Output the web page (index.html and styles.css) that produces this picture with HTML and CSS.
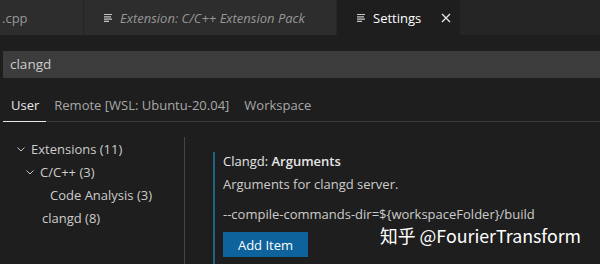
FILE: index.html
```html
<!DOCTYPE html>
<html lang="en">
<head>
  <meta charset="UTF-8">
  <title>Settings</title>
  <link rel="stylesheet" href="styles.css">
</head>
<body>
  <div class="tabs">
    <div class="tab tab-cut">.cpp</div>
    <div class="tab tab-preview">
      <svg class="tab-icon" width="10" height="10" viewBox="0 0 10 10">
        <path d="M1 1.5h8M1 3.8h7M1 6.1h8M1 8.4h5" stroke="#c5c5c5" stroke-width="1.2"/>
      </svg>
      <span>Extension: C/C++ Extension Pack</span>
    </div>
    <div class="tab tab-active">
      <svg class="tab-icon" width="10" height="10" viewBox="0 0 10 10">
        <path d="M1 1.5h8M1 3.8h7M1 6.1h8M1 8.4h5" stroke="#c5c5c5" stroke-width="1.2"/>
      </svg>
      <span>Settings</span>
      <svg class="tab-close" width="10" height="10" viewBox="0 0 10 10">
        <path d="M1 1l8 8M9 1l-8 8" stroke="#e8e8e8" stroke-width="1.3"/>
      </svg>
    </div>
  </div>

  <div class="editor">
    <div class="search">clangd</div>

    <div class="scopes">
      <span class="scope scope-on">User</span>
      <span class="scope">Remote [WSL: Ubuntu-20.04]</span>
      <span class="scope">Workspace</span>
    </div>

    <div class="body">
      <ul class="toc">
        <li class="lvl0">
          <svg class="chev" width="10" height="10" viewBox="0 0 10 10"><path d="M1.5 3.5L5 7l3.5-3.5" fill="none" stroke="#c5c5c5" stroke-width="1"/></svg>
          Extensions (11)
        </li>
        <li class="lvl1">
          <svg class="chev" width="10" height="10" viewBox="0 0 10 10"><path d="M1.5 3.5L5 7l3.5-3.5" fill="none" stroke="#c5c5c5" stroke-width="1"/></svg>
          C/C++ (3)
        </li>
        <li class="lvl2">Code Analysis (3)</li>
        <li class="leaf">clangd (8)</li>
      </ul>

      <div class="divider"></div>

      <div class="setting">
        <div class="setting-title">Clangd: <b>Arguments</b></div>
        <div class="setting-desc">Arguments for clangd server.</div>
        <div class="setting-item">--compile-commands-dir=${workspaceFolder}/build</div>
        <button class="add-btn">Add Item</button>
      </div>
    </div>

    <div class="watermark">知乎 @FourierTransform</div>
  </div>
</body>
</html>
```

FILE: styles.css
```css
body {
  margin: 0;
  width: 600px;
  height: 264px;
  overflow: hidden;
  background: #1e1e1e;
  font-family: "Open Sans", "Noto Sans CJK SC", sans-serif;
  font-size: 13px;
  color: #cccccc;
}

/* editor tab strip */
.tabs {
  display: flex;
  height: 35px;
  background: #252526;
}
.tab {
  display: flex;
  align-items: center;
  background: #2d2d2d;
  color: #969696;
  border-right: 1px solid #252526;
  box-sizing: border-box;
}
.tab-cut {
  width: 84px;
  padding-left: 2px;
}
.tab-preview {
  width: 253px;
  padding-left: 19px;
}
.tab-preview span {
  font-style: italic;
}
.tab-active {
  width: 124px;
  padding-left: 19px;
  background: #1e1e1e;
  color: #ffffff;
}
.tab-icon {
  margin-right: 7px;
}
.tab-close {
  margin-left: 20px;
}

.editor {
  position: relative;
  height: 229px;
  overflow: hidden;
}

.search {
  margin: 16px 0 0 3px;
  height: 27px;
  line-height: 27px;
  padding-left: 7px;
  background: #3c3c3c;
  color: #cccccc;
  font-size: 13.5px;
}

/* User / Remote / Workspace */
.scopes {
  display: flex;
  margin: 16px 0 0 3px;
  border-bottom: 1px solid #3a3a3a;
}
.scope {
  padding: 0 7px 5px 8px;
  color: #a8a8a8;
  line-height: 22px;
}
.scope-on {
  color: #e7e7e7;
  border-bottom: 1px solid #e7e7e7;
  margin-bottom: -1px;
}

.body {
  display: flex;
  margin-top: 15px;
  height: 127px;
}

.toc {
  list-style: none;
  margin: 0;
  padding: 0;
  width: 184px;
  color: #cccccc;
}
.toc li {
  display: flex;
  align-items: center;
  height: 23px;
}
.chev {
  margin-right: 5px;
}
.lvl0 { padding-left: 16px; }
.lvl1 { padding-left: 25px; }
.lvl2 { padding-left: 50px; }
.leaf { padding-left: 42px; }

.divider {
  width: 1px;
  background: #454545;
}

.setting {
  margin: 15px 0 0 28px;
  padding-left: 8px;
  border-left: 2px solid #1b6484;
}
.setting-title {
  color: #e7e7e7;
  line-height: 18px;
}
.setting-title b {
  font-weight: 600;
}
.setting-desc {
  margin-top: 5px;
  line-height: 18px;
}
.setting-item {
  margin-top: 12px;
  line-height: 18px;
}
.add-btn {
  display: block;
  margin-top: 9px;
  width: 85px;
  height: 25px;
  border: none;
  background: #0e639c;
  color: #ffffff;
  font-family: inherit;
  font-size: 13px;
}

/* site watermark in the lower right corner */
.watermark {
  position: absolute;
  left: 380px;
  top: 187px;
  color: #ffffff;
  font-size: 17.8px;
  font-family: "Noto Sans CJK SC", sans-serif;
}
```
